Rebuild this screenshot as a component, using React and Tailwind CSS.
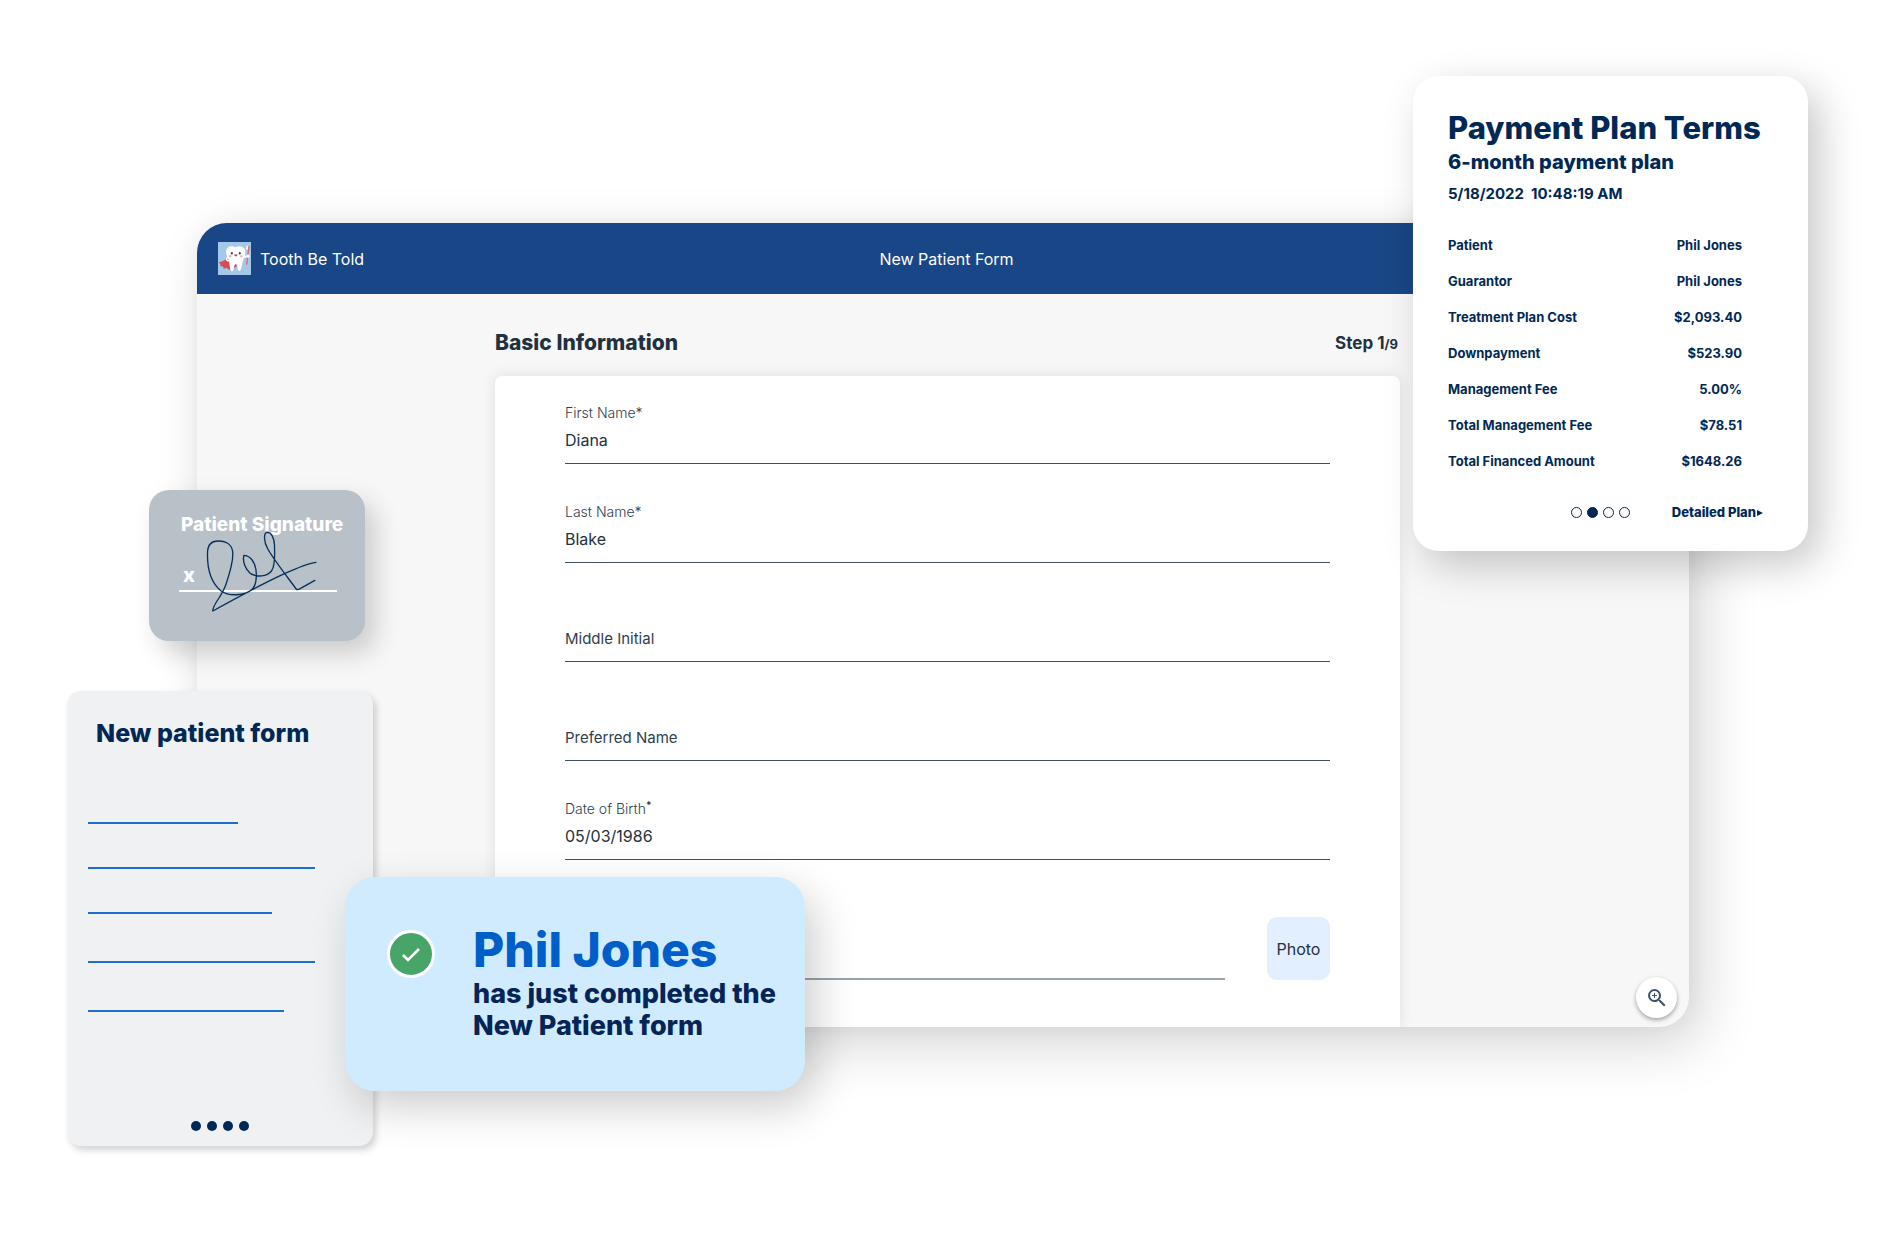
import React, { useState } from "react";
import { MdZoomIn } from "react-icons/md";

const planRows = [
  ["Patient", "Phil Jones"],
  ["Guarantor", "Phil Jones"],
  ["Treatment Plan Cost", "$2,093.40"],
  ["Downpayment", "$523.90"],
  ["Management Fee", "5.00%"],
  ["Total Management Fee", "$78.51"],
  ["Total Financed Amount", "$1648.26"],
];

const ToothLogo = () => (
  <svg className="w-[33px] h-[33px]" viewBox="0 0 100 100" aria-hidden="true">
    <rect width="100" height="100" fill="#a4c8ea" />
    <path d="M31 46 C22 56 12 60 2 61 L8 68 L6 73 L15 74 L17 81 L27 79 L33 84 L55 76 L60 58 Z" fill="#d94a55" />
    <path
      d="M53 16 C44 10 27 11 25 27 C23 40 30 47 33 56 C36 69 35 88 44 89 C49 88 47 68 54 67 C61 68 57 89 65 88 C73 86 72 66 76 56 C80 46 85 38 82 25 C79 11 62 11 53 16 Z"
      fill="#ffffff"
    />
    <path d="M31 46 C24 50 24 56 31 57 M76 46 L90 43" stroke="#ffffff" strokeWidth="5" strokeLinecap="round" fill="none" />
    <path d="M94 13 L87 67" stroke="#dc6670" strokeWidth="4" strokeLinecap="round" />
    <path d="M89 12 L87 23" stroke="#ffffff" strokeWidth="5" />
    <circle cx="91" cy="43" r="5" fill="#ffffff" />
    <ellipse cx="42" cy="34" rx="3" ry="4" fill="#3c3a45" />
    <ellipse cx="66" cy="34" rx="3" ry="4" fill="#3c3a45" />
    <path d="M48 38 Q54 50 60 38 Z" fill="#c9404b" />
    <circle cx="37" cy="43" r="4" fill="#f7b9c0" />
    <circle cx="71" cy="43" r="4" fill="#f7b9c0" />
  </svg>
);

const inputStyle =
  "block w-full h-10 pb-2 text-base bg-transparent border-b border-[#3d5061] text-[#22313f] placeholder:text-[15px] placeholder:text-[#2f3e4d] placeholder:opacity-100 focus:outline-none";

// A field with its label above the value
const Field = ({ id, label, value, onChange }) => (
  <div className="h-[62px]">
    <label htmlFor={id} className="block h-[22px] text-sm leading-[22px] font-light text-[#2f3e4d]">
      {label}
    </label>
    <input type="text" id={id} name={id} value={value} onChange={onChange} className={inputStyle} />
  </div>
);

// An empty field, the label sits on the line
const EmptyField = ({ id, label, value, onChange }) => (
  <div className="h-[62px] pt-[22px]">
    <input
      type="text"
      id={id}
      name={id}
      aria-label={label}
      placeholder={label}
      value={value}
      onChange={onChange}
      className={inputStyle}
    />
  </div>
);

const PaymentPlanCard = () => {
  const [page, setPage] = useState(1);

  return (
    <section className="absolute top-[76px] right-[77px] w-[395px] h-[475px] pt-8 pl-[35px] bg-white rounded-[26px] text-[#002855] font-bold shadow-[12px_14px_40px_rgba(0,0,0,0.22)]">
      <h2 className="text-[31px] leading-10 font-extrabold whitespace-nowrap">Payment Plan Terms</h2>
      <h3 className="text-xl leading-7 font-extrabold">6-month payment plan</h3>
      <p className="mt-1 text-[15px] leading-7 whitespace-pre">5/18/2022  10:48:19 AM</p>

      <table className="mt-[19px] w-[294px] text-[13px] leading-[18px]">
        <tbody>
          {planRows.map(([label, value]) => (
            <tr key={label} className="h-9">
              <th scope="row" className="text-left font-bold">
                {label}
              </th>
              <td className="text-right">{value}</td>
            </tr>
          ))}
        </tbody>
      </table>

      <div className="mt-[23px] pr-[45px] flex items-center justify-end">
        <div className="flex gap-[5px] mr-[42px]">
          {[0, 1, 2, 3].map((i) => (
            <button
              key={i}
              type="button"
              aria-label={`Page ${i + 1}`}
              onClick={() => setPage(i)}
              className={`w-[11px] h-[11px] rounded-full border border-[#002855] ${page === i ? "bg-[#002855]" : "bg-white"}`}
            />
          ))}
        </div>
        <a href="#detailed-plan" className="text-[13px] leading-5 font-extrabold whitespace-nowrap flex items-center">
          Detailed Plan
          <svg className="w-[6px] h-[9px] ml-px" viewBox="0 0 6 9" aria-hidden="true">
            <path d="M0 2 L6 5 L0 8 Z" fill="#002855" />
          </svg>
        </a>
      </div>
    </section>
  );
};

const SignatureCard = () => (
  <section className="absolute top-[490px] left-[149px] w-[216px] h-[151px] pt-5 pl-[30px] pr-7 bg-[#b8c0c8] rounded-[20px] text-white font-extrabold shadow-[10px_12px_26px_rgba(0,0,0,0.18)]">
    <h2 className="pl-[2px] text-[19px] leading-[30px] whitespace-nowrap">Patient Signature</h2>
    <div className="mt-5 pl-1 h-8 border-b-2 border-white text-xl leading-[30px]">x</div>
    <svg className="absolute inset-0 w-full h-full" viewBox="58 60 645 453" fill="none" aria-hidden="true">
      <path
        d="M557 277 C530 281 500 294 463 311 C400 340 340 372 248 423 C246 405 272 385 287 344 C300 306 308 275 308 252 C308 226 290 213 264 213 C240 213 232 227 232 250 C231 300 242 337 272 362 C295 380 345 378 366 358 C381 342 379 312 377 297 C373 275 360 257 341 256 C337 275 345 297 360 310 C382 323 410 320 424 303 C437 285 433 250 433 225 C432 205 424 187 411 187 C400 188 400 215 413 237 C430 268 475 325 498 357 Q501 361 510 356 L554 331"
        stroke="#06305c"
        strokeWidth="4"
        strokeLinejoin="round"
        strokeLinecap="round"
      />
    </svg>
  </section>
);

const PatientFormCard = () => (
  <section className="absolute top-[691px] left-[67px] w-[306px] h-[455px] pt-6 px-[21px] bg-[#f0f1f3] rounded-[14px] shadow-[3px_4px_7px_rgba(0,0,0,0.18)]">
    <h2 className="pl-2 text-[25px] leading-9 font-extrabold text-[#002855] whitespace-nowrap">New patient form</h2>
    <div className="mt-[71px] flex flex-col gap-[43px]">
      <div className="h-[2px] w-[150px] bg-[#1b6fd0]" />
      <div className="h-[2px] w-[227px] bg-[#1b6fd0]" />
      <div className="h-[2px] w-[184px] bg-[#1b6fd0]" />
      <div className="h-[2px] w-[227px] bg-[#1b6fd0] mt-1" />
      <div className="h-[2px] w-[196px] bg-[#1b6fd0] mt-1" />
    </div>
    <div className="mt-[109px] flex justify-center gap-[6px]">
      {[0, 1, 2, 3].map((i) => (
        <span key={i} className="w-[10px] h-[10px] rounded-full bg-[#002855]" />
      ))}
    </div>
  </section>
);

const CompletedToast = () => (
  <section
    role="status"
    className="absolute top-[877px] left-[345px] w-[460px] h-[214px] pt-[45px] pl-[42px] flex items-start bg-[#d1ebfe] rounded-[30px] font-extrabold shadow-[10px_16px_44px_rgba(0,0,0,0.2)]"
  >
    <div className="mt-2 w-12 h-12 shrink-0 rounded-full border-[3px] border-white bg-[#48a568]">
      <svg className="w-full h-full" viewBox="0 0 42 42" fill="none" aria-hidden="true">
        <path d="M13 22 L18 27 L29 16" stroke="#ffffff" strokeWidth="2.6" />
      </svg>
    </div>
    <div className="ml-[38px] text-[#052556] whitespace-nowrap">
      <p className="text-5xl leading-[56px] text-[#005ec8]">Phil Jones</p>
      <p className="text-[27px] leading-8">
        has just completed the
        <br />
        New Patient form
      </p>
    </div>
  </section>
);

const App = () => {
  const [form, setForm] = useState({
    firstName: "Diana",
    lastName: "Blake",
    middleInitial: "",
    preferredName: "",
    birthDate: "05/03/1986",
    photo: "",
  });

  const handleChange = (e) => {
    setForm({ ...form, [e.target.name]: e.target.value });
  };

  return (
    <div className="relative min-h-screen pl-[197px] pr-[196px] pt-[223px] pb-[100px] bg-white font-['Inter',sans-serif]">
      <main className="relative rounded-tl-[30px] rounded-br-[30px] bg-[#f7f7f7] overflow-hidden shadow-[14px_18px_56px_rgba(0,0,0,0.16),0_0_24px_rgba(0,0,0,0.05)]">
        <header className="h-[71px] pl-[21px] pr-[14px] grid grid-cols-3 items-center bg-[#194686] text-white text-base">
          <div className="flex items-center gap-[9px]">
            <ToothLogo />
            <span>Tooth Be Told</span>
          </div>
          <h1 className="text-center">New Patient Form</h1>
        </header>

        <div className="pt-[33px] pl-[298px] pr-[289px]">
          <div className="flex items-center justify-between pr-[2px] h-8 leading-8 font-bold text-[#22313f]">
            <h2 className="text-[21px] font-extrabold">Basic Information</h2>
            <p className="text-[17px]">
              Step 1<span className="text-[13px]">/9</span>
            </p>
          </div>

          <form className="mt-[17px] px-[70px] pt-[26px] pb-[47px] bg-white rounded-t-[7px] shadow-[0_0_14px_rgba(30,50,80,0.12)]">
            <div className="flex flex-col gap-[37px]">
              <Field id="firstName" label="First Name*" value={form.firstName} onChange={handleChange} />
              <Field id="lastName" label="Last Name*" value={form.lastName} onChange={handleChange} />
              <EmptyField id="middleInitial" label="Middle Initial" value={form.middleInitial} onChange={handleChange} />
              <EmptyField id="preferredName" label="Preferred Name" value={form.preferredName} onChange={handleChange} />
              <Field
                id="birthDate"
                label={
                  <>
                    Date of Birth<sup className="font-bold text-[10px]">*</sup>
                  </>
                }
                value={form.birthDate}
                onChange={handleChange}
              />
            </div>
            <div className="mt-[57px] flex items-end gap-[42px]">
              <input
                type="text"
                name="photo"
                aria-label="Photo"
                value={form.photo}
                onChange={handleChange}
                className="flex-1 min-w-0 h-10 bg-transparent border-b-2 border-[#9aa2ab] focus:outline-none"
              />
              <button type="button" className="w-[63px] h-[63px] rounded-[10px] bg-[#e2effe] text-base text-[#22313f]">
                Photo
              </button>
            </div>
          </form>
        </div>

        <button
          type="button"
          aria-label="Zoom in"
          className="absolute right-3 bottom-[9px] w-[41px] h-[41px] flex items-center justify-center rounded-full bg-white text-[#3f4f73] shadow-[0_2px_4px_rgba(0,0,0,0.35)]"
        >
          <MdZoomIn className="w-6 h-6" />
        </button>
      </main>

      <PaymentPlanCard />
      <SignatureCard />
      <PatientFormCard />
      <CompletedToast />
    </div>
  );
};

export default App;
